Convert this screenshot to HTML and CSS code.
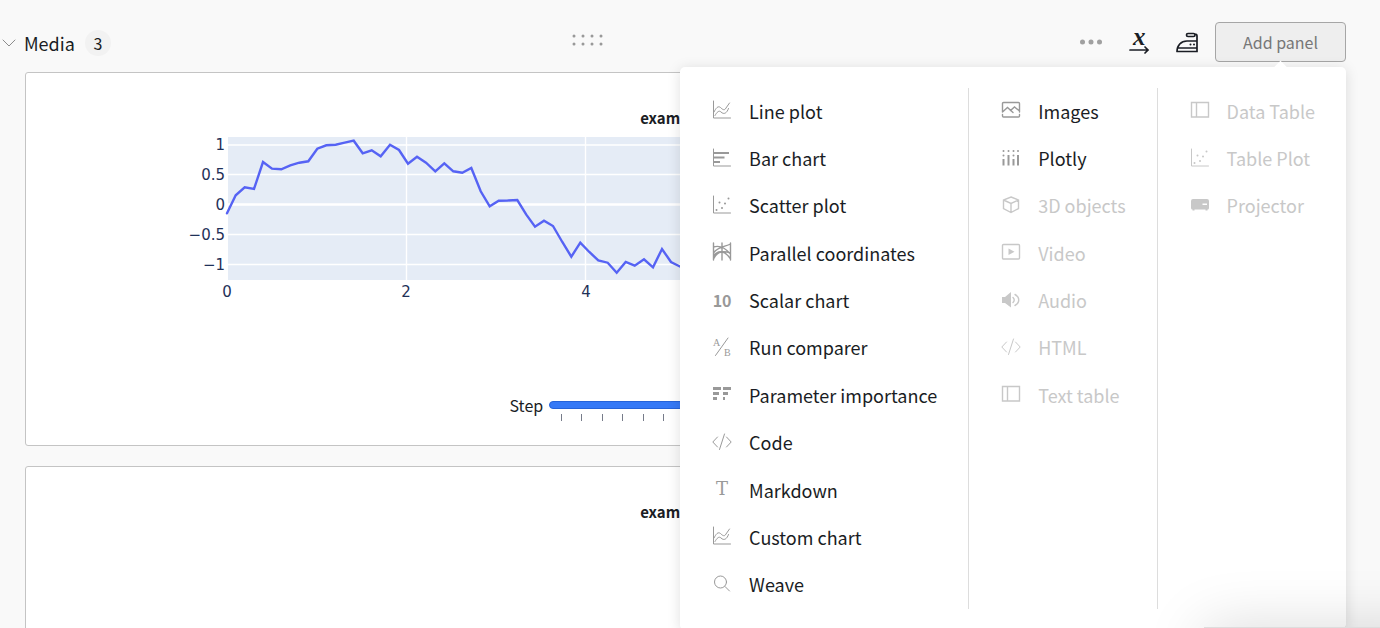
FILE: index.html
```html
<!DOCTYPE html>
<html lang="en">
  <head>
    <meta charset="UTF-8" />
    <meta name="viewport" content="width=device-width, initial-scale=1.0" />
    <link rel="stylesheet" href="styles.css">
    <title>Media</title>
  </head>
  <body>
    <svg class="sprite" aria-hidden="true">
      <symbol id="i-line" viewBox="0 0 20 20"><path d="M1.500 1v17h17M2 12c2-4 4-6.500 6.500-4.500 2 2 4 3.500 5.500.5L17.500 3M3 15.500c2-3.500 4-5.500 6-3.500 3 3 6 1 7.500-3.500"/></symbol>
      <symbol id="i-bar" viewBox="0 0 20 20"><path d="M1.500 1v17h17"/><path class="thick" d="M2 5h15M2 9.500h10.500M2 14h6"/></symbol>
      <symbol id="i-scatter" viewBox="0 0 20 20"><path d="M1.500 1v17h17"/><path class="dots" d="M4.500 15h.01M7.500 7.500h.01M10 13h.01M13 8.500h.01M16.500 3.500h.01"/></symbol>
      <symbol id="i-parallel" viewBox="0 0 20 20"><path class="medium" d="M1.500 1v17M10 1v17M18.500 1v17M1.500 5c6 -2 11 0 17 7M1.500 11c5-7 12-6 17-9M1.500 17c4-9 11-8 17-6M1.500 14c5-7 12-5 17 3"/></symbol>
      <symbol id="i-param" viewBox="0 0 20 20"><path class="heavy" d="M1 4.500h8M11 4.500h8M1 9.500h6M11 9.500h5M1 14.500h4M11 14.500h2"/></symbol>
      <symbol id="i-code" viewBox="0 0 20 20"><path d="M5.500 5L.8 10l4.700 5M14.500 5l4.700 5-4.700 5M12.500 2l-5 15.500"/></symbol>
      <symbol id="i-search" viewBox="0 0 20 20"><circle cx="8.500" cy="8" r="6"/><path d="M13 12.500l4.500 4.500"/></symbol>
      <symbol id="i-image" viewBox="0 0 20 20"><path class="medium" d="M1.500 12V3.500q0-1 1-1h15q1 0 1 1V12M1.500 14.500v1.500q0 1 1 1h15q1 0 1-1v-1.500M1.500 12l5-4.500 5.500 5M9.500 10.500L13.500 7l5 4"/></symbol>
      <symbol id="i-plotly" viewBox="0 0 20 20"><path class="thick" d="M2.500 11v6.500M7.500 7v10.500M12.500 11v6.500M17 7v10.500"/><path class="dots" d="M2.500 3h.01M7.500 3h.01M12.500 3h.01M17 3h.01M2.500 7.500h.01M12.500 7.500h.01"/></symbol>
      <symbol id="i-cube" viewBox="0 0 20 20"><path class="medium" d="M10 2l7.500 3v8.500L10 17.500l-7.500-4V5zM2.500 5L10 8.500 17.500 5M10 8.500v9"/></symbol>
      <symbol id="i-video" viewBox="0 0 20 20"><rect class="medium" x="1.500" y="2.500" width="17" height="14.500" rx="1"/><path class="fill" d="M7.500 6.500v6.500l6-3.200z"/></symbol>
      <symbol id="i-audio" viewBox="0 0 20 20"><path class="fill" d="M1 7h3l6-5v15.500L4 13H1z"/><path class="medium" d="M12 7.500q2.500 2.500 0 5M14 4.500c5 2.500 5 8.500 0 11"/></symbol>
      <symbol id="i-table" viewBox="0 0 20 20"><path class="medium" d="M1.500 2.500h17v14.500h-17zM6.500 2.500v14.500"/></symbol>
      <symbol id="i-projector" viewBox="0 0 20 20"><path class="fill" fill-rule="evenodd" d="M3 4h14q2 0 2 2v7q0 1.500-1.500 1.500v1h-2v-1h-11v1h-2v-1Q1 14.500 1 13V6q0-2 2-2zM12.500 8.500v1.500h4.500V8.500z"/></symbol>
    </svg>

    <main class="page">
      <header class="section-header">
        <div class="section-title">
          <button class="icon-button" aria-label="Collapse section">
            <svg class="chevron" viewBox="0 0 14 8"><path d="M1 1l6 6 6-6"/></svg>
          </button>
          <h2>Media</h2>
          <span class="count">3</span>
        </div>

        <svg class="drag-handle" viewBox="0 0 32 12"><path d="M2 2h.01M11 2h.01M20 2h.01M29 2h.01M2 10h.01M11 10h.01M20 10h.01M29 10h.01"/></svg>

        <div class="actions">
          <button class="icon-button" aria-label="More">
            <svg class="more" viewBox="0 0 24 24"><path d="M3.500 12h.01M12 12h.01M20.500 12h.01"/></svg>
          </button>
          <button class="icon-button" aria-label="X axis">
            <svg class="tool" viewBox="0 0 24 24">
              <path d="M3 20h18M18 17l3 3-3 3"/>
              <text x="6" y="15">x</text>
            </svg>
          </button>
          <button class="icon-button" aria-label="Smoothing">
            <svg class="tool" viewBox="0 0 24 24"><path d="M2 21.500c0-6 4-10.500 10-10.500h10M2 21.500h20V6q0-2-2-2M3 18h19M13 3.500h5.500q1.500 0 1.500 1.500T18.500 6.500H13q-1.500 0-1.500-1.500T13 3.500z"/><path class="dots" d="M15.500 14.500h.01M19 14.500h.01"/></svg>
          </button>
          <div class="add-panel">
            <button class="add-button">Add panel</button>
            <div class="menu">
              <div class="menu-column">
                <button class="item"><svg><use href="#i-line"/></svg>Line plot</button>
                <button class="item"><svg><use href="#i-bar"/></svg>Bar chart</button>
                <button class="item"><svg><use href="#i-scatter"/></svg>Scatter plot</button>
                <button class="item"><svg><use href="#i-parallel"/></svg>Parallel coordinates</button>
                <button class="item"><span class="glyph number">10</span>Scalar chart</button>
                <button class="item">
                  <svg viewBox="0 0 20 20"><path d="M3.500 18.500L16 1"/><text x="1" y="9">A</text><text x="12" y="19">B</text></svg>Run comparer
                </button>
                <button class="item"><svg><use href="#i-param"/></svg>Parameter importance</button>
                <button class="item"><svg><use href="#i-code"/></svg>Code</button>
                <button class="item"><span class="glyph">T</span>Markdown</button>
                <button class="item"><svg><use href="#i-line"/></svg>Custom chart</button>
                <button class="item"><svg><use href="#i-search"/></svg>Weave</button>
              </div>
              <div class="menu-column">
                <button class="item"><svg><use href="#i-image"/></svg>Images</button>
                <button class="item"><svg><use href="#i-plotly"/></svg>Plotly</button>
                <button class="item" disabled><svg><use href="#i-cube"/></svg>3D objects</button>
                <button class="item" disabled><svg><use href="#i-video"/></svg>Video</button>
                <button class="item" disabled><svg><use href="#i-audio"/></svg>Audio</button>
                <button class="item" disabled><svg><use href="#i-code"/></svg>HTML</button>
                <button class="item" disabled><svg><use href="#i-table"/></svg>Text table</button>
              </div>
              <div class="menu-column">
                <button class="item" disabled><svg><use href="#i-table"/></svg>Data Table</button>
                <button class="item" disabled><svg><use href="#i-scatter"/></svg>Table Plot</button>
                <button class="item" disabled><svg><use href="#i-projector"/></svg>Projector</button>
              </div>
            </div>
          </div>
        </div>
      </header>

      <section class="panels">
        <article class="panel">
          <h3>example_fig</h3>
          <svg class="chart" viewBox="26 130 1000 170">
            <rect class="plot-area" x="228" y="137" width="798" height="143"/>
            <path class="grid" d="M228 145H1026M228 174.500H1026M228 234.500H1026M228 264.500H1026M406.500 137V280M585.500 137V280"/>
            <path class="zero" d="M228 204.500H1026"/>
            <polyline class="trace" points="227,213.300 235.700,195.300 244.700,187.300 254,189 263,162 272,168.700 281.300,169.300 290.300,165.300 299.300,162.700 308.300,161.300 317.300,148.700 326.300,145.300 335.700,144.700 344.700,142.700 353.700,140.700 362.700,153.300 371.700,150.300 380.700,156.300 390,144.700 399,150 408,163.700 417,156.700 426,162.700 435.300,171.300 444.300,163.300 453.300,171.300 462.300,172.700 471.300,168 480.700,191.300 489.700,206.300 498.700,200.700 507.700,200.500 517.300,200 526.300,214.700 535,226.700 544,220.700 553,226 562.300,242 571.300,256.700 580.300,242.700 589.300,252 598.300,260.300 607.700,262.700 616.700,272.700 625.700,262 634.700,265.700 644,259.300 653,267.300 662,249 671,262 680.300,266.700 690,268"/>
            <g class="y-labels">
              <text x="225" y="150">1</text>
              <text x="225" y="180">0.5</text>
              <text x="225" y="210">0</text>
              <text x="225" y="240">−0.5</text>
              <text x="225" y="270">−1</text>
            </g>
            <g class="x-labels">
              <text x="227" y="297">0</text>
              <text x="406" y="297">2</text>
              <text x="586" y="297">4</text>
            </g>
          </svg>
          <div class="step">
            <label for="step">Step</label>
            <div class="slider">
              <input type="range" id="step" min="0" max="14" value="14">
              <div class="ticks"></div>
            </div>
          </div>
        </article>

        <article class="panel">
          <h3>example_fig</h3>
        </article>
      </section>
    </main>

    <div class="toast"></div>
  </body>
</html>
```
FILE: styles.css
```css
body {
  margin: 0;
  background-color: #f9f9f9;
  color: #1a1d24;
  font-family: "Noto Sans CJK SC", "Open Sans", sans-serif;
}

.page {
  height: 100vh;
  overflow: hidden;
  box-sizing: border-box;
  padding: 22px 34px 0 0;
}

button {
  font: inherit;
  color: inherit;
  border: 0;
  padding: 0;
  background: none;
  cursor: pointer;
}

svg {
  fill: none;
  stroke: currentColor;
  stroke-linecap: round;
  overflow: visible;
}

svg text {
  stroke: none;
  fill: currentColor;
  font-family: "Liberation Serif", serif;
  font-size: 10px;
}

.sprite {
  position: absolute;
  width: 0;
  height: 0;
}

.dots,
.thick {
  stroke-width: 2;
}

.medium {
  stroke-width: 1.4;
}

.heavy {
  stroke-width: 3;
}

.thick,
.heavy {
  stroke-linecap: butt;
}

.fill {
  fill: currentColor;
  stroke: none;
}

/* section header */

.section-header {
  display: flex;
  justify-content: space-between;
  align-items: center;
  height: 40px;
}

.section-title {
  display: flex;
  align-items: center;
  padding: 2px 0 0 2px;
}

.section-title h2 {
  margin: 0 10px 0 8px;
  font-size: 18px;
  font-weight: 400;
  line-height: 24px;
}

.icon-button {
  display: flex;
}

.chevron {
  width: 14px;
  height: 8px;
  color: #8c8c8c;
}

.count {
  width: 26px;
  border-radius: 13px;
  background-color: #f2f2f2;
  font-size: 16px;
  line-height: 26px;
  text-align: center;
}

.drag-handle {
  width: 32px;
  height: 12px;
  margin-bottom: 4px;
  color: #999;
  stroke-width: 3;
}

.actions {
  display: flex;
  align-items: center;
  gap: 16px;
  padding-left: 14px;
}

.icon-button + .icon-button {
  margin-left: 8px;
}

.more {
  width: 24px;
  height: 24px;
  color: #a0a0a0;
  stroke-width: 5;
}

.tool {
  width: 24px;
  height: 24px;
  stroke-width: 1.7;
}

.tool text {
  font-size: 25px;
  font-style: italic;
  font-weight: 700;
}

.add-panel {
  position: relative;
}

.add-button {
  display: block;
  width: 131px;
  height: 40px;
  border: 1px solid #a6a6a6;
  border-radius: 4px;
  background-color: #eee;
  color: #777;
  font-size: 16px;
}

/* add panel menu */

.menu {
  position: absolute;
  z-index: 2;
  top: 45px;
  right: 0;
  display: flex;
  padding: 21px 0;
  border-radius: 5px;
  background-color: #fff;
  box-shadow: 0 2px 14px rgba(0, 0, 0, 0.13);
}

.menu::before {
  content: "";
  position: absolute;
  top: -4px;
  right: 60px;
  width: 11px;
  height: 11px;
  background-color: #fff;
  transform: rotate(45deg);
}

.menu-column {
  display: grid;
  grid-template-rows: repeat(11, 1fr);
  height: 521px;
  padding: 0 31px 0 32px;
}

.menu-column + .menu-column {
  border-left: 1px solid #ddd;
}

.item {
  display: flex;
  align-items: center;
  gap: 17px;
  padding-bottom: 2px;
  font-size: 18px;
  white-space: nowrap;
}

.item svg,
.glyph {
  width: 20px;
  height: 20px;
  margin-bottom: 1px;
  color: #999;
}

.item:disabled,
.item:disabled svg {
  color: #c8c8c8;
}

.glyph {
  font-family: "DejaVu Serif", serif;
  font-size: 18px;
  line-height: 20px;
  text-align: center;
}

.number {
  font-family: "Noto Sans CJK SC", sans-serif;
  font-size: 16px;
  font-weight: 700;
}

/* panels */

.panels {
  display: flex;
  flex-direction: column;
  gap: 20px;
  margin-top: 10px;
  padding-left: 25px;
}

.panel {
  box-sizing: border-box;
  min-height: 374px;
  padding-top: 34px;
  border: 1px solid #c4c4c4;
  border-radius: 3px;
  background-color: #fff;
  overflow: hidden;
}

.panel h3 {
  margin: 0;
  font-size: 15px;
  font-weight: 700;
  line-height: 22px;
  text-align: center;
}

.chart {
  display: block;
  width: 1000px;
  height: 170px;
  margin-top: 1px;
}

.plot-area {
  fill: #e5ecf6;
  stroke: none;
}

.grid {
  stroke: #fff;
  stroke-width: 1.4;
}

.zero {
  stroke: #fff;
  stroke-width: 2.6;
}

.trace {
  stroke: #5663f4;
  stroke-width: 2.4;
}

.chart text {
  fill: #1f3158;
  font-family: "DejaVu Sans", sans-serif;
  font-size: 15px;
}

.y-labels {
  text-anchor: end;
}

.x-labels {
  text-anchor: middle;
}

.step {
  display: flex;
  gap: 6px;
  width: 352px;
  margin: 95px auto 0;
  font-size: 16px;
  line-height: 20px;
}

.slider {
  flex: 1;
  padding-top: 6px;
}

.slider input {
  appearance: none;
  display: block;
  box-sizing: border-box;
  width: 100%;
  height: 8px;
  margin: 0;
  border: 1px solid #2563d9;
  border-radius: 4px;
  background-color: #3579f6;
}

.ticks {
  height: 7px;
  margin: 5px 0 0 12px;
  background: repeating-linear-gradient(to right, #777c8a 0 1px, transparent 1px 20.5px);
}

/* notification waiting below the window edge */

.toast {
  position: fixed;
  z-index: 3;
  top: calc(100vh - 1px);
  right: -60px;
  width: 236px;
  height: 60px;
  background-color: #ddd;
  box-shadow: 0 0 60px rgba(0, 0, 0, 0.15);
}
```
